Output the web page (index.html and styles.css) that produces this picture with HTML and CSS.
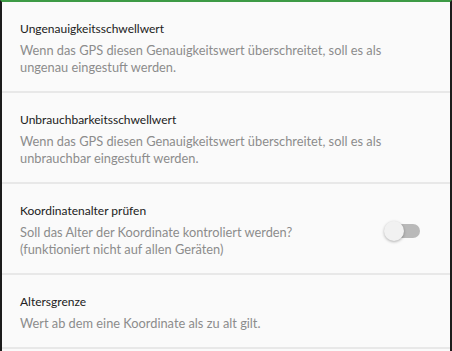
FILE: index.html
```html
<!DOCTYPE html>
<html>
<head>
  <meta charset="UTF-8">
  <title>Einstellungen</title>
  <link rel="stylesheet" href="styles.css">
</head>
<body>
  <div class="screen">
    <!-- Preference list -->
    <div class="pref">
      <div class="pref-text">
        <div class="pref-title">Ungenauigkeitsschwellwert</div>
        <div class="pref-summary">Wenn das GPS diesen Genauigkeitswert überschreitet, soll es als ungenau eingestuft werden.</div>
      </div>
    </div>
    <div class="pref">
      <div class="pref-text">
        <div class="pref-title">Unbrauchbarkeitsschwellwert</div>
        <div class="pref-summary">Wenn das GPS diesen Genauigkeitswert überschreitet, soll es als unbrauchbar eingestuft werden.</div>
      </div>
    </div>
    <div class="pref">
      <div class="pref-text">
        <div class="pref-title">Koordinatenalter prüfen</div>
        <div class="pref-summary">Soll das Alter der Koordinate kontroliert werden?<br>(funktioniert nicht auf allen Geräten)</div>
      </div>
      <span class="switch"><span class="switch-thumb"></span></span>
    </div>
    <div class="pref">
      <div class="pref-text">
        <div class="pref-title">Altersgrenze</div>
        <div class="pref-summary">Wert ab dem eine Koordinate als zu alt gilt.</div>
      </div>
    </div>
  </div>
</body>
</html>
```

FILE: styles.css
```css
/* Global */
html, body {
  margin: 0;
  padding: 0;
  height: 100%;
}
body {
  font-family: Lato, "Open Sans", sans-serif;
  background: #fafafa;
}
/* Screen frame */
.screen {
  box-sizing: border-box;
  height: 351px;
  border-top: 2px solid #3d9a45;
  border-left: 2px solid #1c1c1c;
  border-right: 2px solid #1c1c1c;
  background: #fafafa;
  overflow: hidden;
}
/* Preference rows */
.pref {
  display: flex;
  align-items: center;
  padding: 17px 18px 15px 18px;
  border-bottom: 2px solid #e8e8e8;
}
.pref-text {
  flex: 1;
  max-width: 372px;
}
.pref-title {
  font-size: 12px;
  line-height: 20px;
  color: #212121;
  margin-bottom: 3px;
}
.pref-summary {
  font-size: 12.8px;
  line-height: 17px;
  color: #8c8c8c;
}
/* Toggle switch (off) */
.switch {
  position: relative;
  width: 34px;
  height: 14px;
  margin-left: auto;
  margin-right: 12px;
  margin-top: 2px;
  border-radius: 7px;
  background: #b9b9b9;
}
.switch-thumb {
  position: absolute;
  left: -2px;
  top: -3px;
  width: 20px;
  height: 20px;
  border-radius: 50%;
  background: #f1f1f1;
  box-shadow: 0 1px 3px rgba(0, 0, 0, 0.3);
}
```
